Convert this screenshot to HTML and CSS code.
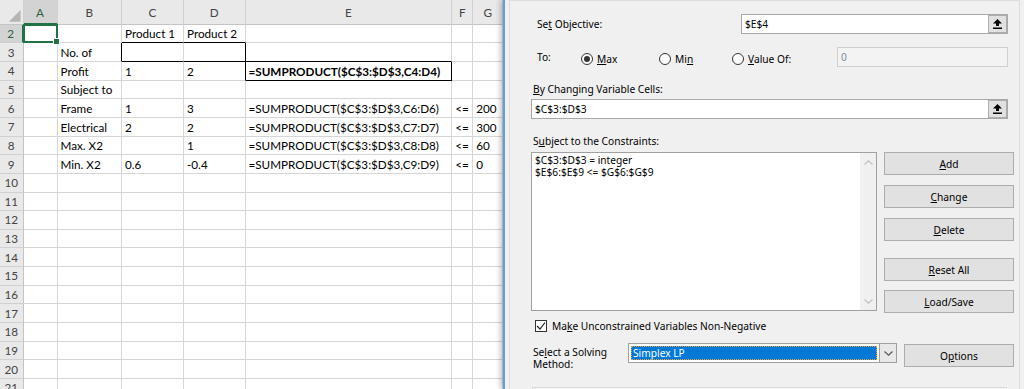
FILE: index.html
```html
<!DOCTYPE html>
<html>
<head>
    <title>Solver Parameters</title>
    <link rel="stylesheet" href="styles.css">
</head>
<body>
<div class="screen">
    <div class="sheet">
        <div class="row head">
            <div class="c rh corner"><svg width="23" height="24" viewBox="0 0 23 24"><polygon points="21,10 21,22 9,22" fill="#b5b5b5"/></svg></div>
            <div class="c wa hsel">A</div>
            <div class="c wb">B</div>
            <div class="c wc">C</div>
            <div class="c wd">D</div>
            <div class="c we">E</div>
            <div class="c wf">F</div>
            <div class="c wg">G</div>
        </div>
        <div class="row">
            <div class="c rh rsel">2</div>
            <div class="c wa sel"></div>
            <div class="c wb"></div>
            <div class="c wc bk-b">Product 1</div>
            <div class="c wd bk-b">Product 2</div>
            <div class="c we"></div>
            <div class="c wf"></div>
            <div class="c wg"></div>
        </div>
        <div class="row">
            <div class="c rh">3</div>
            <div class="c wa"></div>
            <div class="c wb bk-r">No. of</div>
            <div class="c wc bk-b"></div>
            <div class="c wd bk-b bk-r"></div>
            <div class="c we bk-b"></div>
            <div class="c wf"></div>
            <div class="c wg"></div>
        </div>
        <div class="row">
            <div class="c rh">4</div>
            <div class="c wa"></div>
            <div class="c wb">Profit</div>
            <div class="c wc">1</div>
            <div class="c wd bk-r">2</div>
            <div class="c we bk-b bk-r bold">=SUMPRODUCT($C$3:$D$3,C4:D4)</div>
            <div class="c wf"></div>
            <div class="c wg"></div>
        </div>
        <div class="row">
            <div class="c rh">5</div>
            <div class="c wa"></div>
            <div class="c wb">Subject to</div>
            <div class="c wc"></div>
            <div class="c wd"></div>
            <div class="c we"></div>
            <div class="c wf"></div>
            <div class="c wg"></div>
        </div>
        <div class="row">
            <div class="c rh">6</div>
            <div class="c wa"></div>
            <div class="c wb">Frame</div>
            <div class="c wc">1</div>
            <div class="c wd">3</div>
            <div class="c we">=SUMPRODUCT($C$3:$D$3,C6:D6)</div>
            <div class="c wf">&lt;=</div>
            <div class="c wg">200</div>
        </div>
        <div class="row">
            <div class="c rh">7</div>
            <div class="c wa"></div>
            <div class="c wb">Electrical</div>
            <div class="c wc">2</div>
            <div class="c wd">2</div>
            <div class="c we">=SUMPRODUCT($C$3:$D$3,C7:D7)</div>
            <div class="c wf">&lt;=</div>
            <div class="c wg">300</div>
        </div>
        <div class="row">
            <div class="c rh">8</div>
            <div class="c wa"></div>
            <div class="c wb">Max. X2</div>
            <div class="c wc"></div>
            <div class="c wd">1</div>
            <div class="c we">=SUMPRODUCT($C$3:$D$3,C8:D8)</div>
            <div class="c wf">&lt;=</div>
            <div class="c wg">60</div>
        </div>
        <div class="row">
            <div class="c rh">9</div>
            <div class="c wa"></div>
            <div class="c wb">Min. X2</div>
            <div class="c wc">0.6</div>
            <div class="c wd">-0.4</div>
            <div class="c we">=SUMPRODUCT($C$3:$D$3,C9:D9)</div>
            <div class="c wf">&lt;=</div>
            <div class="c wg">0</div>
        </div>
        <div class="row"><div class="c rh">10</div><div class="c wa"></div><div class="c wb"></div><div class="c wc"></div><div class="c wd"></div><div class="c we"></div><div class="c wf"></div><div class="c wg"></div></div>
        <div class="row"><div class="c rh">11</div><div class="c wa"></div><div class="c wb"></div><div class="c wc"></div><div class="c wd"></div><div class="c we"></div><div class="c wf"></div><div class="c wg"></div></div>
        <div class="row"><div class="c rh">12</div><div class="c wa"></div><div class="c wb"></div><div class="c wc"></div><div class="c wd"></div><div class="c we"></div><div class="c wf"></div><div class="c wg"></div></div>
        <div class="row"><div class="c rh">13</div><div class="c wa"></div><div class="c wb"></div><div class="c wc"></div><div class="c wd"></div><div class="c we"></div><div class="c wf"></div><div class="c wg"></div></div>
        <div class="row"><div class="c rh">14</div><div class="c wa"></div><div class="c wb"></div><div class="c wc"></div><div class="c wd"></div><div class="c we"></div><div class="c wf"></div><div class="c wg"></div></div>
        <div class="row"><div class="c rh">15</div><div class="c wa"></div><div class="c wb"></div><div class="c wc"></div><div class="c wd"></div><div class="c we"></div><div class="c wf"></div><div class="c wg"></div></div>
        <div class="row"><div class="c rh">16</div><div class="c wa"></div><div class="c wb"></div><div class="c wc"></div><div class="c wd"></div><div class="c we"></div><div class="c wf"></div><div class="c wg"></div></div>
        <div class="row"><div class="c rh">17</div><div class="c wa"></div><div class="c wb"></div><div class="c wc"></div><div class="c wd"></div><div class="c we"></div><div class="c wf"></div><div class="c wg"></div></div>
        <div class="row"><div class="c rh">18</div><div class="c wa"></div><div class="c wb"></div><div class="c wc"></div><div class="c wd"></div><div class="c we"></div><div class="c wf"></div><div class="c wg"></div></div>
        <div class="row"><div class="c rh">19</div><div class="c wa"></div><div class="c wb"></div><div class="c wc"></div><div class="c wd"></div><div class="c we"></div><div class="c wf"></div><div class="c wg"></div></div>
        <div class="row"><div class="c rh">20</div><div class="c wa"></div><div class="c wb"></div><div class="c wc"></div><div class="c wd"></div><div class="c we"></div><div class="c wf"></div><div class="c wg"></div></div>
        <div class="row"><div class="c rh">21</div><div class="c wa"></div><div class="c wb"></div><div class="c wc"></div><div class="c wd"></div><div class="c we"></div><div class="c wf"></div><div class="c wg"></div></div>
    </div>

    <div class="dialog">
        <div class="panel">
            <div class="obj-row">
                <div class="obj-label">Se<u>t</u> Objective:</div>
                <div class="input">
                    <span>$E$4</span>
                    <div class="ref-btn">
                        <svg width="9" height="10" viewBox="0 0 9 10"><path d="M4.5 0 L9 4.5 H6 V7 H3 V4.5 H0 Z" fill="#000"/><rect x="0" y="8.5" width="9" height="1.5" fill="#000"/></svg>
                    </div>
                </div>
            </div>

            <div class="to-row">
                <div class="to-label">To:</div>
                <div class="radio r-max"><span class="dot checked"></span><span><u>M</u>ax</span></div>
                <div class="radio r-min"><span class="dot"></span><span>Mi<u>n</u></span></div>
                <div class="radio r-val"><span class="dot"></span><span><u>V</u>alue Of:</span></div>
                <div class="input disabled">0</div>
            </div>

            <div class="field-label"><u>B</u>y Changing Variable Cells:</div>
            <div class="field">
                <div class="input">
                    <span>$C$3:$D$3</span>
                    <div class="ref-btn">
                        <svg width="9" height="10" viewBox="0 0 9 10"><path d="M4.5 0 L9 4.5 H6 V7 H3 V4.5 H0 Z" fill="#000"/><rect x="0" y="8.5" width="9" height="1.5" fill="#000"/></svg>
                    </div>
                </div>
            </div>

            <div class="field-label">S<u>u</u>bject to the Constraints:</div>
            <div class="constraints">
                <div class="listbox">
                    <div class="list-items">
                        <div>$C$3:$D$3 = integer</div>
                        <div>$E$6:$E$9 &lt;= $G$6:$G$9</div>
                    </div>
                    <div class="scroll">
                        <svg width="9" height="5" viewBox="0 0 9 5"><polyline points="0.5,4.5 4.5,0.8 8.5,4.5" fill="none" stroke="#c2c2c2" stroke-width="1.2"/></svg>
                        <svg width="9" height="5" viewBox="0 0 9 5"><polyline points="0.5,0.5 4.5,4.2 8.5,0.5" fill="none" stroke="#c2c2c2" stroke-width="1.2"/></svg>
                    </div>
                </div>
                <div class="btn-col">
                    <div class="btn"><span><u>A</u>dd</span></div>
                    <div class="btn b-change"><span><u>C</u>hange</span></div>
                    <div class="btn b-delete"><span><u>D</u>elete</span></div>
                    <div class="btn b-reset"><span><u>R</u>eset All</span></div>
                    <div class="btn b-load"><span><u>L</u>oad/Save</span></div>
                </div>
            </div>

            <div class="check-row">
                <span class="box">
                    <svg width="10" height="10" viewBox="0 0 10 10"><polyline points="1,5 4,8 9,1.5" fill="none" stroke="#222" stroke-width="1.2"/></svg>
                </span>
                <span>Ma<u>k</u>e Unconstrained Variables Non-Negative</span>
            </div>

            <div class="method-row">
                <div class="method-label">Se<u>l</u>ect a Solving<br>Method:</div>
                <div class="select">
                    <div class="select-val">Simplex LP</div>
                    <div class="select-arrow">
                        <svg width="9" height="5" viewBox="0 0 9 5"><polyline points="0.5,0.5 4.5,4.2 8.5,0.5" fill="none" stroke="#555" stroke-width="1.1"/></svg>
                    </div>
                </div>
                <div class="btn b-options"><span>O<u>p</u>tions</span></div>
            </div>

            <div class="group"></div>
        </div>
    </div>
</div>
</body>
</html>
```

FILE: styles.css
```css
body {
    margin: 0;
}

.screen {
    display: flex;
    width: 1024px;
    height: 389px;
    overflow: hidden;
}

/* spreadsheet */
.sheet {
    flex: none;
    width: 503px;
    height: 389px;
    overflow: hidden;
    background: #fff;
    font-family: Lato, "Liberation Sans", sans-serif;
    font-size: 11.7px;
    color: #000;
}

.row {
    display: flex;
    height: 18.67px;
}

.row.head {
    height: 24.6px;
}

.c {
    flex: none;
    box-sizing: border-box;
    display: flex;
    align-items: flex-end;
    padding-left: 3px;
    line-height: 17px;
    white-space: nowrap;
    border-right: 1px solid #d6d6d6;
    border-bottom: 1px solid #d6d6d6;
}

.rh { width: 23.5px; }
.wa { width: 34px; }
.wb { width: 64.5px; }
.wc { width: 62px; }
.wd { width: 61.5px; }
.we { width: 206.8px; }
.wf { width: 21px; }
.wg { width: 30px; }

.rh {
    justify-content: center;
    align-items: center;
    padding: 0;
    background: #e9e9e9;
    color: #444;
    border-bottom-color: #d0d0d0;
    border-right-color: #c4c4c4;
}

.head .c {
    justify-content: center;
    padding: 0 0 3px 0;
    background: #e9e9e9;
    color: #444;
    border-bottom-color: #c4c4c4;
    border-right-color: #d0d0d0;
}

.head .corner {
    padding: 0;
    align-items: stretch;
}

.head .hsel {
    background: #d3d3d3;
    color: #2f5f3f;
    border-bottom: 2px solid #217346;
    padding-bottom: 2px;
}

.rsel {
    background: #d3d3d3;
    color: #2f5f3f;
    border-right: 2px solid #217346;
}

.sel {
    position: relative;
}

.sel::before {
    content: "";
    position: absolute;
    left: -1px;
    top: -1px;
    right: -1px;
    bottom: -1px;
    border: 2px solid #217346;
    z-index: 2;
}

.sel::after {
    content: "";
    position: absolute;
    right: -3px;
    bottom: -3px;
    width: 5px;
    height: 5px;
    background: #217346;
    border: 1px solid #fff;
    z-index: 3;
}

.bk-b { border-bottom-color: #000; }
.bk-r { border-right-color: #000; }
.bold { font-weight: bold; }

/* solver dialog */
.dialog {
    flex: 1;
    background: #f0f0f0;
    border-left: 2px solid #5ea1e0;
    box-shadow: -3px 0 5px rgba(0, 0, 0, 0.22);
    font-family: "Noto Sans", "Open Sans", sans-serif;
    font-size: 10.2px;
    color: #000;
}

.panel {
    margin-left: 4px;
    width: 511px;
    height: 389px;
    box-sizing: border-box;
    border: 1px solid #dcdcdc;
    border-bottom: none;
    padding: 13px 5px 0 21px;
}

.input {
    flex: 1;
    display: flex;
    align-items: center;
    height: 20px;
    box-sizing: border-box;
    margin-right: 6px;
    padding-left: 3px;
    background: #fff;
    border: 1px solid #a8a8a8;
}

.input.disabled {
    background: #f3f3f3;
    border-color: #cfcfcf;
    color: #7f8c9c;
}

.ref-btn {
    margin-left: auto;
    width: 19px;
    height: 18px;
    box-sizing: border-box;
    display: flex;
    align-items: center;
    justify-content: center;
    background: #e1e1e1;
    border: 1px solid #adadad;
}

.obj-row {
    display: flex;
    align-items: center;
    height: 20px;
}

.obj-label {
    width: 210px;
    box-sizing: border-box;
    padding-left: 6px;
}

.to-row {
    display: flex;
    height: 20px;
    margin-top: 13px;
}

.to-label {
    width: 50px;
    box-sizing: border-box;
    padding: 3px 0 0 6px;
}

.radio {
    display: flex;
    align-items: center;
    gap: 4px;
    height: 12px;
    margin-top: 6px;
}

.r-max { width: 78px; }
.r-min { width: 73px; }
.r-val { width: 105px; }

.dot {
    width: 12px;
    height: 12px;
    box-sizing: border-box;
    border: 1px solid #333;
    border-radius: 50%;
    background: #fff;
    display: flex;
    align-items: center;
    justify-content: center;
}

.dot.checked::after {
    content: "";
    width: 6px;
    height: 6px;
    border-radius: 50%;
    background: #333;
}

.field-label {
    margin-top: 15px;
    height: 14px;
    line-height: 14px;
    padding-left: 2px;
}

.field {
    display: flex;
    margin-top: 3px;
}

.constraints {
    display: flex;
    margin-top: 4px;
}

.listbox {
    display: flex;
    width: 346px;
    height: 159px;
    box-sizing: border-box;
    background: #fff;
    border: 1px solid #a0a0a0;
}

.list-items {
    flex: 1;
    padding: 1px 3px;
    line-height: 12px;
}

.scroll {
    width: 16px;
    display: flex;
    flex-direction: column;
    justify-content: space-between;
    align-items: center;
    padding: 7px 0 6px;
    background: #f0f0f0;
}

.btn-col {
    display: flex;
    flex-direction: column;
    width: 130px;
    margin-left: 7px;
}

.btn {
    display: flex;
    align-items: center;
    justify-content: center;
    height: 23px;
    box-sizing: border-box;
    background: #e1e1e1;
    border: 1px solid #adadad;
}

.b-change { margin-top: 10px; }
.b-delete { margin-top: 10px; }
.b-reset { margin-top: 17px; }
.b-load { margin-top: 9px; }

.check-row {
    display: flex;
    align-items: center;
    gap: 5px;
    height: 12px;
    margin-top: 7px;
    padding-left: 4px;
}

.box {
    width: 12px;
    height: 12px;
    box-sizing: border-box;
    border: 1px solid #333;
    background: #fff;
    display: flex;
    align-items: center;
    justify-content: center;
}

.method-row {
    display: flex;
    height: 24px;
    margin-top: 11px;
}

.method-label {
    width: 97px;
    box-sizing: border-box;
    padding: 3px 0 0 2px;
    line-height: 12px;
}

.select {
    display: flex;
    width: 269px;
    height: 20px;
    box-sizing: border-box;
    background: #fff;
    border: 1px solid #a0a0a0;
}

.select-val {
    flex: 1;
    display: flex;
    align-items: center;
    margin: 2px;
    padding-left: 2px;
    background: #0078d7;
    color: #fff;
    outline: 1px dotted #e8a040;
    outline-offset: -1px;
}

.select-arrow {
    width: 16px;
    display: flex;
    align-items: center;
    justify-content: center;
    background: #e8e8e8;
    border-left: 1px solid #a0a0a0;
}

.b-options {
    width: 110px;
    margin: 1px 0 0 7px;
}

.group {
    height: 10px;
    margin: 20px 7px 0 1px;
    border: 1px solid #dcdcdc;
    border-bottom: none;
}
```
